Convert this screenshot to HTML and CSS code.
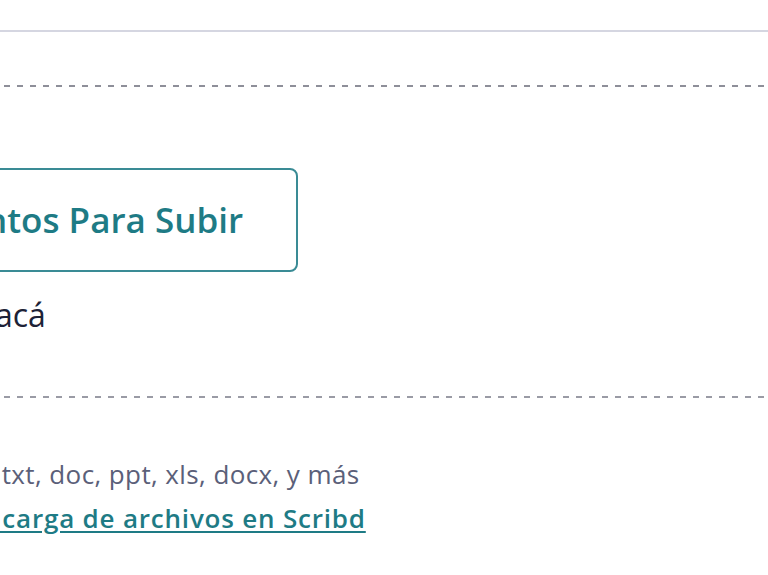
FILE: index.html
```html
<!DOCTYPE html>
<html lang="es">
<head>
<meta charset="utf-8">
<title>Subir documentos</title>
<link rel="stylesheet" href="styles.css">
</head>
<body>
<header class="topbar"></header>
<main class="page">
  <section class="dropzone">
    <div class="stage">
      <button class="pick" type="button">Seleccionar Documentos Para Subir</button>
      <p class="drag">Agregalos acá</p>
    </div>
  </section>
  <div class="stage info">
    <p class="formats">Formatos de archivo soportados: pdf, txt, doc, ppt, xls, docx, y más</p>
    <a class="learn" href="#">Consultar más información sobre la carga de archivos en Scribd</a>
  </div>
</main>
</body>
</html>
```
FILE: styles.css
```css
html, body {
  margin: 0;
  padding: 0;
  background: #ffffff;
  overflow: hidden;
  font-family: "Open Sans", "Lato", "Liberation Sans", sans-serif;
}

.topbar {
  height: 30px;
  border-bottom: 2px solid #d5d6e1;
}

.page {
  display: flex;
  flex-direction: column;
}

.dropzone {
  margin-top: 53px;
  padding: 83px 0 63px;
  background-image:
    repeating-linear-gradient(90deg, #8e8f99 0 6px, transparent 6px 13px),
    repeating-linear-gradient(90deg, #9a9ba5 0 6px, transparent 6px 13px);
  background-size: 100% 2px, 100% 2px;
  background-position: 4px 0, 4px 100%;
  background-repeat: no-repeat;
}

.stage {
  width: 1200px;
  margin-left: -657px;
  display: flex;
  flex-direction: column;
  align-items: center;
}

.pick {
  box-sizing: border-box;
  height: 104px;
  padding: 0 53px;
  border: 2px solid #3a8b95;
  border-radius: 8px;
  background: #ffffff;
  color: #1e7b85;
  font-family: inherit;
  font-size: 35px;
  font-weight: 600;
  line-height: 100px;
  white-space: nowrap;
}

.drag {
  margin: 23px 0 0;
  font-size: 32px;
  line-height: 40px;
  color: #1d2236;
  white-space: nowrap;
}

.info {
  margin-top: 60px;
  gap: 12px;
}

.formats {
  margin: 0;
  font-size: 26px;
  letter-spacing: 0.4px;
  line-height: 32px;
  color: #5b6079;
  white-space: nowrap;
}

.learn {
  font-size: 26px;
  letter-spacing: 0.8px;
  line-height: 32px;
  font-weight: 600;
  color: #1e7b85;
  text-decoration: underline;
  text-decoration-thickness: 2px;
  text-underline-offset: 3px;
  white-space: nowrap;
}
```
